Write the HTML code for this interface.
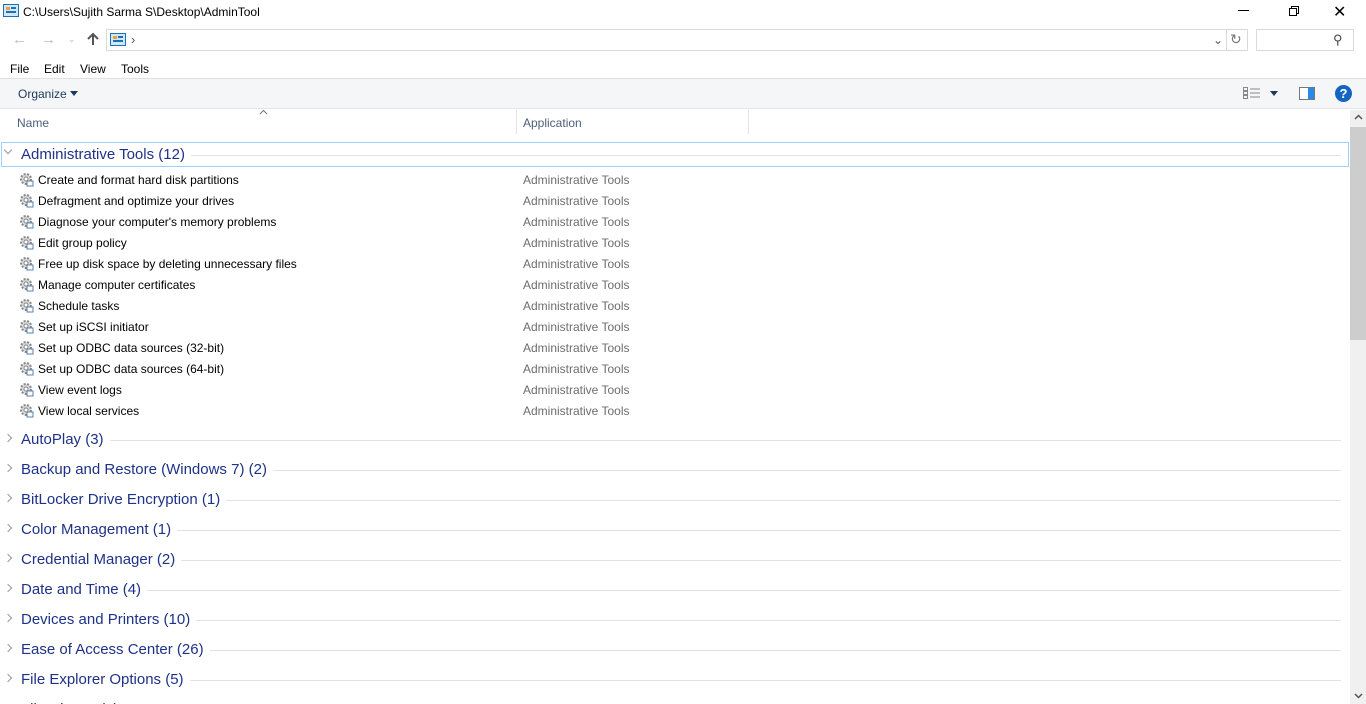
<!DOCTYPE html>
<html><head><meta charset="utf-8"><style>
*{margin:0;padding:0;box-sizing:border-box}
html,body{width:1366px;height:704px;overflow:hidden}
body{background:#fff;font-family:"Liberation Sans",sans-serif;font-size:12px;color:#000;position:relative}
.a{position:absolute;white-space:nowrap}
.grp{position:absolute;left:0;width:1345px;height:24px}
.grp .t{position:absolute;left:21px;top:2px;font-size:15px;color:#1e3287;background:#fff;padding-right:6px}
.grp .ln{position:absolute;left:21px;right:4px;top:11px;border-top:1px solid #e2e2e2}
.grp .ch{position:absolute;left:5px;top:6px;width:6px;height:6px;border-right:1px solid #999;border-bottom:1px solid #999;transform:rotate(-45deg)}
.it{position:absolute;left:0;height:20px;width:700px}
.it .ic{position:absolute;left:19px;top:2px;width:15px;height:15px}
.it .n{position:absolute;left:38px;top:3px;font-size:12px}
.it .p{position:absolute;left:523px;top:3px;font-size:12px;color:#6d6d6d}
</style></head><body>
<svg class="a" style="left:3px;top:4px" width="16" height="14"><rect x="0.5" y="0.5" width="15" height="12" fill="#cfe8f7" stroke="#1f6fb5"/><rect x="3" y="3" width="4" height="3" fill="#f0a030"/><rect x="8" y="3" width="5" height="2" fill="#1f6fb5"/><rect x="3" y="7" width="10" height="2" fill="#1f6fb5"/></svg>
<div class="a" style="left:23px;top:5px;font-size:12px">C:\Users\Sujith Sarma S\Desktop\AdminTool</div>
<div class="a" style="left:1238px;top:10px;width:11px;border-top:1px solid #000"></div>
<div class="a" style="left:1291px;top:6px;width:8px;height:8px;border:1px solid #000;background:#fff"></div>
<div class="a" style="left:1289px;top:8px;width:8px;height:8px;border:1px solid #000;background:#fff"></div>
<div class="a" style="left:1333px;top:2px;font-size:16px">✕</div>
<div class="a" style="left:12px;top:31px;font-size:15px;color:#bbb">←</div>
<div class="a" style="left:41px;top:31px;font-size:15px;color:#bbb">→</div>
<div class="a" style="left:68px;top:34px;font-size:9px;color:#bbb">⌄</div>
<svg class="a" style="left:86px;top:32px" width="14" height="14"><path d="M7 13V2M2 7l5-5 5 5" stroke="#555" stroke-width="2" fill="none"/></svg>
<div class="a" style="left:106px;top:29px;width:1142px;height:22px;border:1px solid #d9d9d9"></div>
<div class="a" style="left:1226px;top:29px;height:22px;border-left:1px solid #d9d9d9"></div>
<svg class="a" style="left:110px;top:33px" width="16" height="14"><rect x="0.5" y="0.5" width="15" height="12" fill="#cfe8f7" stroke="#1f6fb5"/><rect x="3" y="3" width="4" height="3" fill="#f0a030"/><rect x="8" y="3" width="5" height="2" fill="#1f6fb5"/><rect x="3" y="7" width="10" height="2" fill="#1f6fb5"/></svg>
<div class="a" style="left:131px;top:32px;font-size:13px;color:#555">›</div>
<div class="a" style="left:1213px;top:33px;font-size:12px;color:#555">⌄</div>
<div class="a" style="left:1230px;top:31px;font-size:14px;color:#777">↻</div>
<div class="a" style="left:1256px;top:29px;width:98px;height:22px;border:1px solid #d9d9d9"></div>
<div class="a" style="left:1333px;top:32px;font-size:13px;color:#444">⚲</div>
<div class="a" style="left:10px;top:62px">File</div>
<div class="a" style="left:44px;top:62px">Edit</div>
<div class="a" style="left:80px;top:62px">View</div>
<div class="a" style="left:121px;top:62px">Tools</div>
<div class="a" style="left:0;top:78px;width:1366px;height:31px;background:#f5f6f7;border-top:1px solid #e0e0e0;border-bottom:1px solid #e5e5e5"></div>
<div class="a" style="left:18px;top:87px;color:#1e395b">Organize</div>
<div class="a" style="left:70px;top:91px;border:4px solid transparent;border-top:5px solid #1e395b"></div>
<svg class="a" style="left:1243px;top:87px" width="20" height="13"><g stroke="#888"><rect x="0.5" y="0.5" width="4" height="3" fill="none"/><rect x="0.5" y="4.5" width="4" height="3" fill="none"/><rect x="0.5" y="8.5" width="4" height="3" fill="none"/><line x1="7" y1="2" x2="17" y2="2"/><line x1="7" y1="6" x2="17" y2="6"/><line x1="7" y1="10" x2="17" y2="10"/></g></svg>
<div class="a" style="left:1270px;top:91px;border:4px solid transparent;border-top:5px solid #1e395b"></div>
<div class="a" style="left:1299px;top:87px;width:16px;height:13px;border:1px solid #777;background:#fff"></div>
<div class="a" style="left:1308px;top:88px;width:6px;height:11px;background:#2b8ae6"></div>
<div class="a" style="left:1335px;top:85px;width:17px;height:17px;border-radius:50%;background:#1565c0;color:#fff;font-weight:bold;font-size:13px;text-align:center;line-height:17px">?</div>
<div class="a" style="left:17px;top:116px;color:#4c607a">Name</div>
<svg class="a" style="left:259px;top:109px" width="9" height="6"><path d="M1 5l3.5-3.5L8 5" stroke="#777" fill="none"/></svg>
<div class="a" style="left:516px;top:110px;height:24px;border-left:1px solid #e5e5e5"></div>
<div class="a" style="left:523px;top:116px;color:#4c607a">Application</div>
<div class="a" style="left:748px;top:110px;height:24px;border-left:1px solid #e5e5e5"></div>
<div class="a" style="left:1350px;top:110px;width:16px;height:594px;background:#f0f0f0"></div>
<svg class="a" style="left:1354px;top:114px" width="9" height="6"><path d="M1 5l3.5-3.5L8 5" stroke="#555" stroke-width="1.5" fill="none"/></svg>
<div class="a" style="left:1350px;top:127px;width:16px;height:213px;background:#cdcdcd"></div>
<svg class="a" style="left:1354px;top:693px" width="9" height="6"><path d="M1 1l3.5 3.5L8 1" stroke="#555" stroke-width="1.5" fill="none"/></svg>
<div class="a" style="left:1px;top:142px;width:1348px;height:25px;border:1px solid #99d1ff"></div>
<div class="grp" style="top:144px"><div class="ln"></div><div class="ch" style="transform:rotate(45deg);top:3px"></div><div class="t">Administrative Tools (12)</div></div>
<div id="items"></div>
<script>
var n=["Create and format hard disk partitions","Defragment and optimize your drives","Diagnose your computer's memory problems","Edit group policy","Free up disk space by deleting unnecessary files","Manage computer certificates","Schedule tasks","Set up iSCSI initiator","Set up ODBC data sources (32-bit)","Set up ODBC data sources (64-bit)","View event logs","View local services"];
var h="";
n.forEach(function(s,i){h+='<div class="it" style="top:'+(170+i*21)+'px"><svg class="ic" viewBox="0 0 15 15"><circle cx="7" cy="7" r="5" fill="#d8d8d8" stroke="#888" stroke-dasharray="2 1.5" stroke-width="2"/><circle cx="7" cy="7" r="2" fill="#fff" stroke="#888"/><rect x="8" y="9" width="6" height="5" fill="#fff" stroke="#5a7fa8"/></svg><div class="n">'+s+'</div><div class="p">Administrative Tools</div></div>'});
var g=["AutoPlay (3)","Backup and Restore (Windows 7) (2)","BitLocker Drive Encryption (1)","Color Management (1)","Credential Manager (2)","Date and Time (4)","Devices and Printers (10)","Ease of Access Center (26)","File Explorer Options (5)","File History (2)"];
g.forEach(function(s,i){h+='<div class="grp" style="top:'+(429+i*30)+'px"><div class="ln"></div><div class="ch"></div><div class="t">'+s+'</div></div>'});
document.getElementById("items").innerHTML=h;
</script>
</body></html>
